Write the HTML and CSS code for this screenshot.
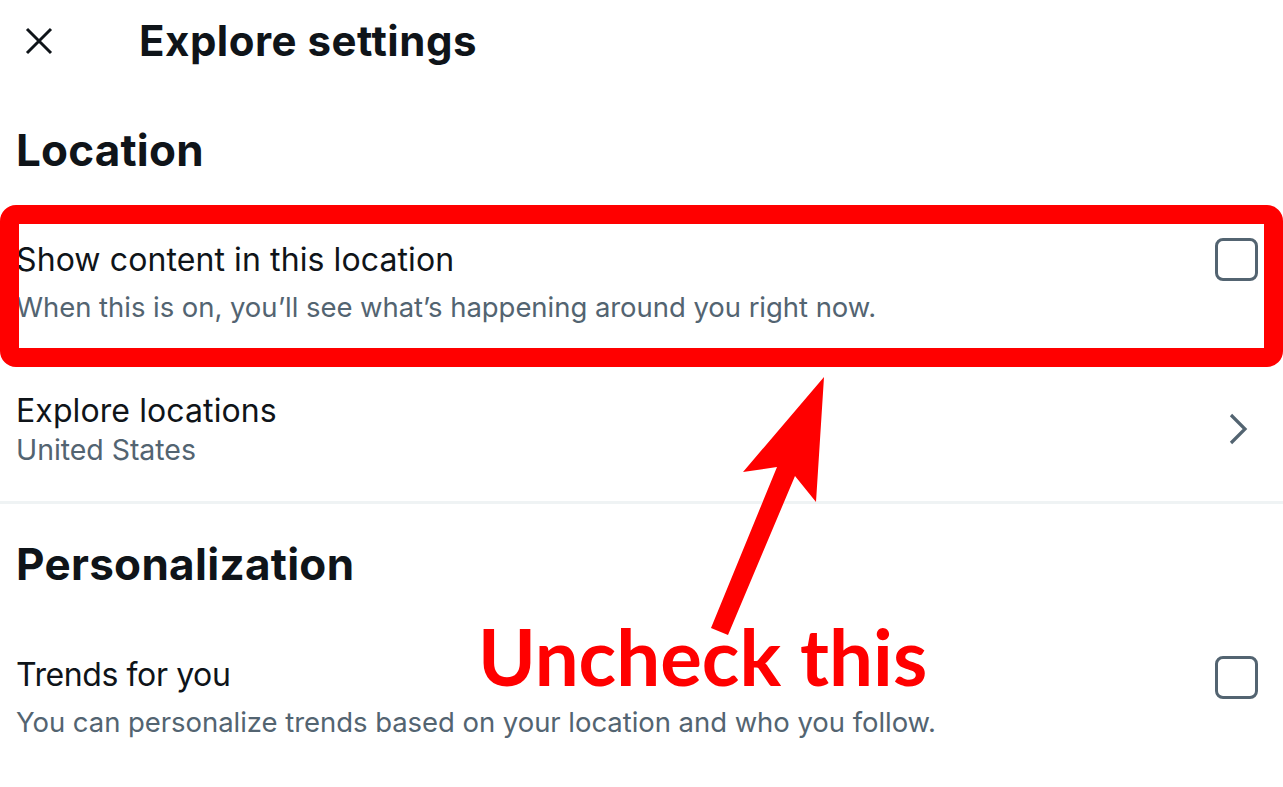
FILE: index.html
```html
<!DOCTYPE html>
<html lang="en">
<head>
<meta charset="utf-8">
<title>Explore settings</title>
<link rel="stylesheet" href="styles.css">
</head>
<body>
<div class="page">
  <header class="top">
    <svg class="close" viewBox="0 0 28 28" aria-hidden="true"><path d="M2 2 L26 26 M26 2 L2 26" stroke="#0f1419" stroke-width="3" fill="none"/></svg>
    <h1 class="title">Explore settings</h1>
  </header>

  <h2 class="section">Location</h2>

  <div class="row row-first">
    <div class="texts">
      <div class="label">Show content in this location</div>
      <div class="sub">When this is on, you’ll see what’s happening around you right now.</div>
    </div>
    <div class="check"></div>
  </div>

  <div class="row row-link">
    <div class="texts">
      <div class="label">Explore locations</div>
      <div class="sub sub-tight">United States</div>
    </div>
    <svg class="chev" viewBox="0 0 20 32" aria-hidden="true"><path d="M3 2 L17 16 L3 30" stroke="#536471" stroke-width="3.2" fill="none"/></svg>
  </div>

  <div class="divider"></div>

  <h2 class="section section-2">Personalization</h2>

  <div class="row row-trends">
    <div class="texts">
      <div class="label label-trends">Trends for you</div>
      <div class="sub">You can personalize trends based on your location and who you follow.</div>
    </div>
    <div class="check"></div>
  </div>

  <div class="highlight"></div>
  <svg class="arrow" viewBox="0 0 1283 787" aria-hidden="true">
    <polygon points="824,377 816,502 795,476 728,635 711,628 777,467 743,472" fill="#ff0000"/>
  </svg>
  <div class="callout">Uncheck this</div>
</div>
</body>
</html>
```

FILE: styles.css
```css
* { box-sizing: border-box; }
html, body { margin: 0; padding: 0; background: #ffffff; }
body {
  font-family: Inter, "Noto Sans", "DejaVu Sans", sans-serif;
  color: #0f1419;
}
.page {
  position: relative;
  width: 1283px;
  height: 787px;
  overflow: hidden;
}
.top {
  display: flex;
  align-items: center;
  height: 82px;
  padding-left: 25px;
}
.close { width: 28px; height: 28px; flex: none; }
.title {
  margin: 0 0 0 86px;
  font-size: 42px;
  font-weight: 700;
  letter-spacing: 0.5px;
  line-height: 46px;
}
.section {
  margin: 0;
  padding: 40px 0 0 16px;
  height: 123px;
  font-size: 44px;
  font-weight: 700;
  line-height: 56px;
  letter-spacing: 0.2px;
}
.section-2 { height: 126px; padding-top: 32px; letter-spacing: 0.3px; }
.row {
  display: flex;
  align-items: flex-start;
  justify-content: space-between;
  padding: 0 25px 0 16px;
}
.row-first { height: 162px; padding-top: 33px; }
.row-link { height: 134px; padding-top: 14px; align-items: center; padding-bottom: 24px; }
.row-trends { padding-top: 23px; }
.row-trends .check { margin-top: 3px; }
.row-first .check { margin-top: 0; }
.label {
  font-size: 32px;
  line-height: 44px;
  font-weight: 400;
  letter-spacing: 0.1px;
}
.label-trends { letter-spacing: -0.4px; }
.sub {
  font-size: 27.5px;
  line-height: 40px;
  color: #536471;
  margin-top: 5px;
  letter-spacing: -0.05px;
}
.sub-tight { margin-top: -3px; font-size: 28.5px; }
.check {
  width: 43px;
  height: 43px;
  border: 3.5px solid #536471;
  border-radius: 8px;
  flex: none;
}
.chev { width: 20px; height: 32px; flex: none; margin-right: 10px; }
.divider { height: 3px; background: #eff3f4; }
.highlight {
  position: absolute;
  left: 0;
  top: 205px;
  width: 1283px;
  height: 162px;
  border: 19px solid #ff0000;
  border-radius: 16px;
}
.arrow {
  position: absolute;
  left: 0;
  top: 0;
  width: 1283px;
  height: 787px;
}
.callout {
  position: absolute;
  left: 478px;
  top: 608px;
  font-family: Lato, "Open Sans", sans-serif;
  font-weight: 700;
  font-size: 78px;
  line-height: 96px;
  color: #ff0000;
}
```
